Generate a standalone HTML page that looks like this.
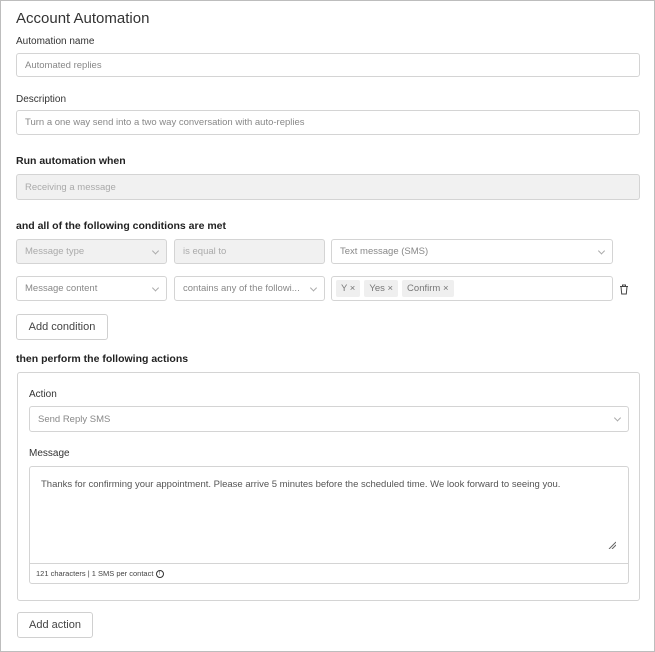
<!DOCTYPE html>
<html><head><style>
*{box-sizing:border-box;margin:0;padding:0}
body{width:655px;height:652px;background:#fff;font-family:"Liberation Sans",sans-serif;color:#333;position:relative;overflow:hidden}
.frame{position:absolute;left:0;top:0;width:655px;height:652px;border:1px solid #bdbdbd}
.a{position:absolute}
.t{font-size:15px;color:#333}
.l{font-size:10px;color:#333}
.b{font-size:10.5px;font-weight:bold;color:#222}
.in{position:absolute;border:1px solid #d4d4d4;border-radius:3px;background:#fff;font-size:9.5px;color:#888;padding-left:8px;display:flex;align-items:center}
.g{background:#f1f1f1;color:#aaa}
.chev{position:absolute;right:8px;top:50%;width:5px;height:5px;border-right:1px solid #aaa;border-bottom:1px solid #aaa;transform:translateY(-70%) rotate(45deg)}
.tag{background:#efefef;border-radius:2px;padding:3px 5px;margin-right:4px;font-size:9.5px;color:#777}
.btn{position:absolute;border:1px solid #d0d0d0;border-radius:3px;background:#fff;font-size:11px;color:#444;display:flex;align-items:center;justify-content:center}
</style></head><body>
<div class="frame"></div>
<div class="a t" style="left:16px;top:10px">Account Automation</div>
<div class="a l" style="left:16px;top:36px">Automation name</div>
<div class="in" style="left:16px;top:53px;width:624px;height:24px">Automated replies</div>
<div class="a l" style="left:16px;top:94px">Description</div>
<div class="in" style="left:16px;top:110px;width:624px;height:25px">Turn a one way send into a two way conversation with auto-replies</div>
<div class="a b" style="left:16px;top:155px">Run automation when</div>
<div class="in g" style="left:16px;top:174px;width:624px;height:26px">Receiving a message</div>
<div class="a b" style="left:16px;top:220px">and all of the following conditions are met</div>
<div class="in g" style="left:16px;top:239px;width:151px;height:25px">Message type<span class="chev"></span></div>
<div class="in g" style="left:174px;top:239px;width:151px;height:25px">is equal to</div>
<div class="in" style="left:331px;top:239px;width:282px;height:25px">Text message (SMS)<span class="chev"></span></div>
<div class="in" style="left:16px;top:276px;width:151px;height:25px">Message content<span class="chev"></span></div>
<div class="in" style="left:174px;top:276px;width:151px;height:25px">contains any of the followi...<span class="chev"></span></div>
<div class="in" style="left:331px;top:276px;width:282px;height:25px;padding-left:4px"><span class="tag">Y ×</span><span class="tag">Yes ×</span><span class="tag">Confirm ×</span></div>
<svg class="a" style="left:619px;top:284px" width="10" height="11" viewBox="0 0 10 11"><path d="M1 2.5h8M3.5 2.5V1h3v1.5M2 2.5l.7 7.5h4.6L8 2.5" fill="none" stroke="#444" stroke-width="1"/></svg>
<div class="btn" style="left:16px;top:314px;width:92px;height:26px">Add condition</div>
<div class="a b" style="left:16px;top:353px">then perform the following actions</div>
<div class="a" style="left:17px;top:372px;width:623px;height:229px;border:1px solid #d4d4d4;border-radius:3px"></div>
<div class="a l" style="left:29px;top:389px">Action</div>
<div class="in" style="left:29px;top:406px;width:600px;height:26px">Send Reply SMS<span class="chev"></span></div>
<div class="a l" style="left:29px;top:448px">Message</div>
<div class="a" style="left:29px;top:466px;width:600px;height:118px;border:1px solid #d4d4d4;border-radius:3px">
<div style="position:absolute;left:11px;top:12px;font-size:9.5px;color:#555">Thanks for confirming your appointment. Please arrive 5 minutes before the scheduled time. We look forward to seeing you.</div>
<svg style="position:absolute;right:12px;top:74px" width="8" height="8"><path d="M1 8L8 1M4 8L8 4" stroke="#666" stroke-width="1"/></svg>
<div style="position:absolute;left:0;right:0;top:96px;border-top:1px solid #d4d4d4"></div>
<div style="position:absolute;left:6px;top:102px;font-size:7.5px;color:#444">121 characters | 1 SMS per contact <span style="display:inline-block;width:8px;height:8px;border:1px solid #333;border-radius:50%;font-size:6px;line-height:6px;text-align:center;vertical-align:middle">!</span></div>
</div>
<div class="btn" style="left:17px;top:612px;width:76px;height:26px">Add action</div>
</body></html>
